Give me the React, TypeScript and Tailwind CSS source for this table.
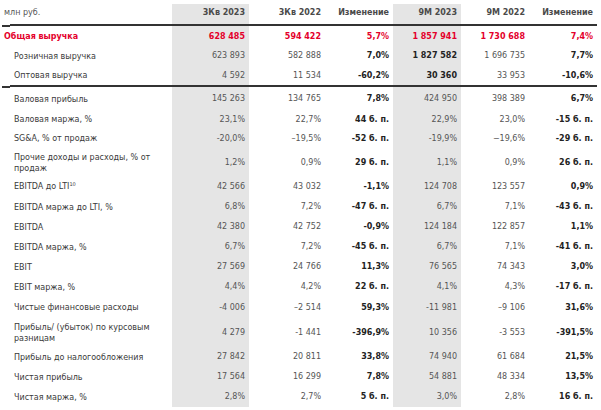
import React from "react";

type Row = {
  label: React.ReactNode;
  v: string[];
  h: string;
  red?: boolean;
  b4?: boolean;
};

const GRID = "grid grid-cols-[172px_77px_76px_68px_68px_68px_68px]";

const sec1: Row[] = [
  { label: "Общая выручка", v: ["628 485", "594 422", "5,7%", "1 857 941", "1 730 688", "7,4%"], h: "h-[19px]", red: true },
  { label: "Розничная выручка", v: ["623 893", "582 888", "7,0%", "1 827 582", "1 696 735", "7,7%"], h: "h-[20px]", b4: true },
  { label: "Оптовая выручка", v: ["4 592", "11 534", "-60,2%", "30 360", "33 953", "-10,6%"], h: "h-[19px]", b4: true },
];

const sec2: Row[] = [
  { label: "Валовая прибыль", v: ["145 263", "134 765", "7,8%", "424 950", "398 389", "6,7%"], h: "h-[22px]" },
  { label: "Валовая маржа, %", v: ["23,1%", "22,7%", "44 б. п.", "22,9%", "23,0%", "-15 б. п."], h: "h-[19px]" },
  { label: "SG&A, % от продаж", v: ["-20,0%", "–19,5%", "-52 б. п.", "-19,9%", "−19,6%", "-29 б. п."], h: "h-[19px]" },
  { label: "Прочие доходы и расходы, % от продаж", v: ["1,2%", "0,9%", "29 б. п.", "1,1%", "0,9%", "26 б. п."], h: "h-[29px]" },
  {
    label: (
      <span>
        EBITDA до LTI<span className="relative -top-[3px] text-[5px]">10</span>
      </span>
    ),
    v: ["42 566", "43 032", "-1,1%", "124 708", "123 557", "0,9%"],
    h: "h-[20px]",
  },
  { label: "EBITDA маржа до LTI, %", v: ["6,8%", "7,2%", "-47 б. п.", "6,7%", "7,1%", "-43 б. п."], h: "h-[20px]" },
  { label: "EBITDA", v: ["42 380", "42 752", "-0,9%", "124 184", "122 857", "1,1%"], h: "h-[20px]" },
  { label: "EBITDA маржа, %", v: ["6,7%", "7,2%", "-45 б. п.", "6,7%", "7,1%", "-41 б. п."], h: "h-[20px]" },
  { label: "EBIT", v: ["27 569", "24 766", "11,3%", "76 565", "74 343", "3,0%"], h: "h-[20px]" },
  { label: "EBIT маржа, %", v: ["4,4%", "4,2%", "22 б. п.", "4,1%", "4,3%", "-17 б. п."], h: "h-[20px]" },
  { label: "Чистые финансовые расходы", v: ["-4 006", "–2 514", "59,3%", "-11 981", "–9 106", "31,6%"], h: "h-[21px]" },
  { label: "Прибыль/ (убыток) по курсовым разницам", v: ["4 279", "-1 441", "-396,9%", "10 356", "-3 553", "-391,5%"], h: "h-[29px]" },
  { label: "Прибыль до налогообложения", v: ["27 842", "20 811", "33,8%", "74 940", "61 684", "21,5%"], h: "h-[20px]" },
  { label: "Чистая прибыль", v: ["17 564", "16 299", "7,8%", "54 881", "48 334", "13,5%"], h: "h-[20px]" },
  { label: "Чистая маржа, %", v: ["2,8%", "2,7%", "5 б. п.", "3,0%", "2,8%", "16 б. п."], h: "h-[20px]" },
];

function DataRow({ r }: { r: Row }) {
  return (
    <>
      <div
        className={`${r.h} flex items-center leading-[11px] ${
          r.red ? "pl-[4px] pr-[12px] font-bold text-[#e4002b]" : "pl-[14px] pr-[12px] text-[#3a3a3a]"
        }`}
      >
        {r.label}
      </div>
      {r.v.map((val, i) => {
        const grey = i === 0 || i === 3;
        const bold = i === 2 || i === 5 || (i === 3 && r.b4);
        return (
          <div
            key={i}
            className={`${r.h} flex items-center justify-end pr-[4px] whitespace-nowrap ${
              grey ? "bg-[#e5e5e5]" : ""
            } ${
              r.red
                ? "font-bold text-[#e4002b]"
                : bold
                ? "font-bold text-[#222222]"
                : "text-[#555555]"
            }`}
          >
            {val}
          </div>
        );
      })}
    </>
  );
}

function Sep() {
  return (
    <>
      <div className="flex h-[3px]">
        <div className="ml-[2px] mt-[1px] h-[2px] w-[8px] bg-[#333333]" />
        <div className="h-[2px] flex-1 bg-[#333333]" />
      </div>
      {[0, 1, 2, 3, 4, 5].map((i) => (
        <div key={i} className={`h-[3px] ${i === 0 || i === 3 ? "bg-[#e5e5e5]" : ""}`}>
          <div className="h-[2px] bg-[#333333]" />
        </div>
      ))}
    </>
  );
}

export default function App() {
  const heads = ["3Кв 2023", "3Кв 2022", "Изменение", "9M 2023", "9M 2022", "Изменение"];
  return (
    <div className="w-[601px] h-[410px] overflow-hidden bg-white pt-[4px] font-['DejaVu_Sans',Verdana,sans-serif] text-[8px]">
      <div className={GRID}>
        <div className="h-[20px] pb-[2px] pl-[4px] flex items-center text-[#555555]">млн руб.</div>
        {heads.map((h, i) => (
          <div
            key={i}
            className={`h-[20px] pb-[2px] pr-[4px] flex items-center justify-end font-bold text-[#4a4a4a] whitespace-nowrap ${
              i === 0 || i === 3 ? "bg-[#e5e5e5]" : ""
            }`}
          >
            {h}
          </div>
        ))}
        <Sep />
        {sec1.map((r, i) => (
          <DataRow key={i} r={r} />
        ))}
        <Sep />
        {sec2.map((r, i) => (
          <DataRow key={i} r={r} />
        ))}
      </div>
    </div>
  );
}
